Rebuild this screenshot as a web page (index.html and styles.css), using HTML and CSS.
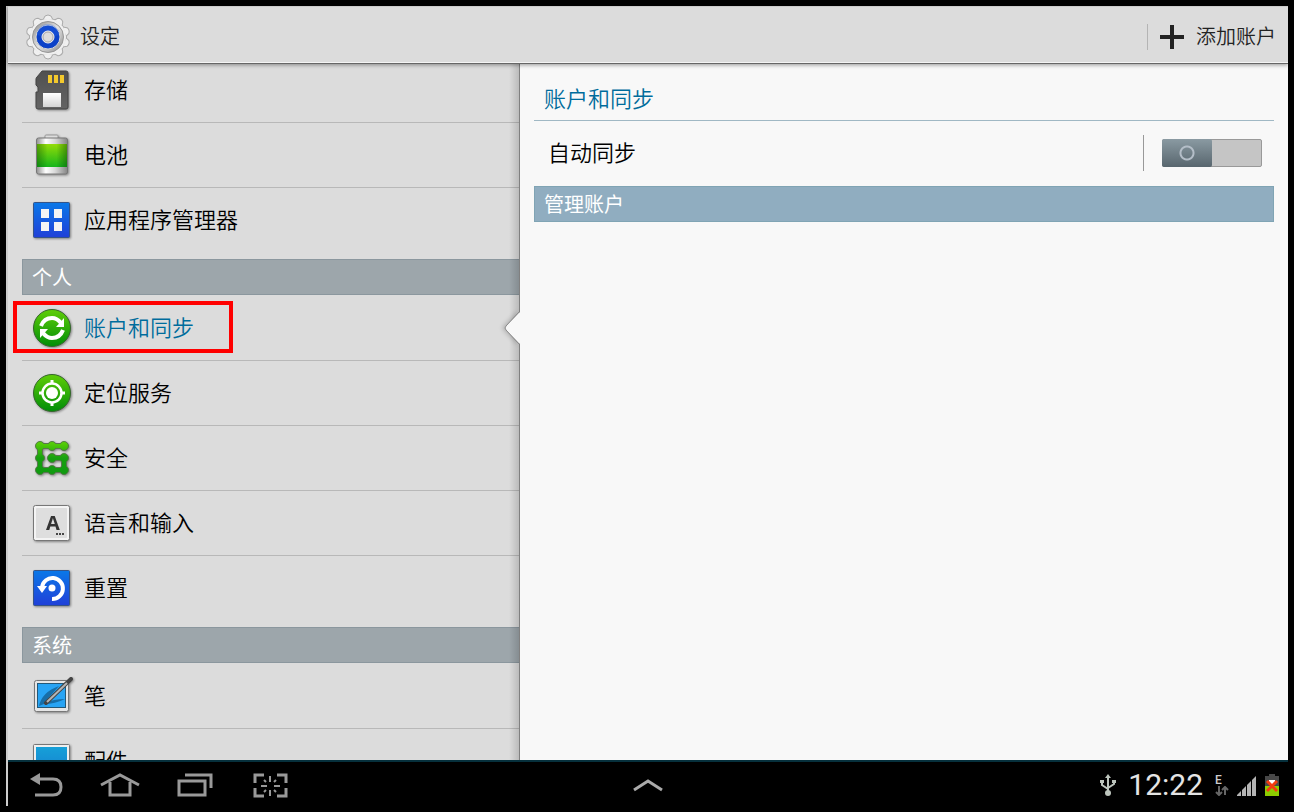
FILE: index.html
```
<!DOCTYPE html>
<html lang="zh-CN">
<head>
    <meta charset="UTF-8">
    <meta name="viewport" content="width=device-width, initial-scale=1.0">
    <title>设定</title>
    <link rel="stylesheet" href="styles.css">
</head>
<body>
    <svg class="defs" width="0" height="0" aria-hidden="true">
        <defs>
            <linearGradient id="verde" x2="0" y2="1"><stop offset="0" stop-color="#5fce08"/><stop offset="1" stop-color="#008d08"/></linearGradient>
            <linearGradient id="verdePuntos" gradientUnits="userSpaceOnUse" x1="0" y1="4" x2="0" y2="36"><stop offset="0" stop-color="#5bd008"/><stop offset=".5" stop-color="#17a010"/><stop offset="1" stop-color="#0f9a10"/></linearGradient>
            <linearGradient id="azul" x2="0" y2="1"><stop offset="0" stop-color="#0a78e8"/><stop offset="1" stop-color="#2040d8"/></linearGradient>
            <linearGradient id="pila" x2="0" y2="1"><stop offset="0" stop-color="#93dc08"/><stop offset="1" stop-color="#16b51c"/></linearGradient>
            <linearGradient id="pilaSombra"><stop offset="0" stop-color="#004000" stop-opacity=".4"/><stop offset=".35" stop-color="#004000" stop-opacity="0"/><stop offset=".65" stop-color="#004000" stop-opacity="0"/><stop offset="1" stop-color="#004000" stop-opacity=".45"/></linearGradient>
            <linearGradient id="metal"><stop offset="0" stop-color="#8f8f8f"/><stop offset=".3" stop-color="#fff"/><stop offset=".6" stop-color="#d8d8d8"/><stop offset="1" stop-color="#858585"/></linearGradient>
            <linearGradient id="blanco" x2="0" y2="1"><stop offset="0" stop-color="#fff"/><stop offset="1" stop-color="#d4d4d4"/></linearGradient>
            <linearGradient id="oscuro" x2="0" y2="1"><stop offset="0" stop-color="#505050"/><stop offset="1" stop-color="#646464"/></linearGradient>
            <linearGradient id="cielo" x2="0" y2="1"><stop offset="0" stop-color="#16a0d8"/><stop offset="1" stop-color="#1684d0"/></linearGradient>
            <linearGradient id="aro" x2="1" y2="1"><stop offset="0" stop-color="#8a8a8a"/><stop offset=".5" stop-color="#e2e2e2"/><stop offset="1" stop-color="#8a8a8a"/></linearGradient>
        </defs>
    </svg>

    <div class="tablet">
        <header class="cabecera">
            <svg class="engranaje" width="46" height="48" viewBox="-23 -24 46 48" aria-hidden="true">
                <g fill="#f0f0f0" stroke="#aaa" stroke-width="1">
                    <circle r="18.500"/>
                    <path id="diente" d="M-5-17L-3-21Q0-23 3-21L5-17Z"/>
                    <use href="#diente" transform="rotate(36)"/>
                    <use href="#diente" transform="rotate(72)"/>
                    <use href="#diente" transform="rotate(108)"/>
                    <use href="#diente" transform="rotate(144)"/>
                    <use href="#diente" transform="rotate(180)"/>
                    <use href="#diente" transform="rotate(216)"/>
                    <use href="#diente" transform="rotate(252)"/>
                    <use href="#diente" transform="rotate(288)"/>
                    <use href="#diente" transform="rotate(324)"/>
                    <circle r="18" stroke="none"/>
                </g>
                <circle r="15.500" fill="url(#aro)" stroke="#969696" stroke-width="1"/>
                <circle r="12" fill="#0b41c8" stroke="#d5d5d5"/>
                <path d="M-11-2A11 11 0 0 1 11-2Q0 2-11-2Z" fill="#2c6bea" opacity=".3"/>
                <circle r="6" fill="#dcdcdc" stroke="#f4f4f4"/>
                <circle r="5" fill="#dcdcdc" stroke="#aaa"/>
            </svg>
            <h1>设定</h1>
            <button class="agregar" type="button">
                <svg width="24" height="24" viewBox="0 0 24 24" aria-hidden="true"><path d="M12 0V24M0 12H24" stroke="#222" stroke-width="4"/></svg>
                <span>添加账户</span>
            </button>
        </header>

        <main class="contenido">
            <nav class="menu">
                <ul>
                    <li><a href="#">
                        <svg class="icono" viewBox="0 0 40 40"><path d="M10 1H34Q36 1 36 3V37Q36 39 34 39H6Q4 39 4 37V22H6V17L4 15V9Q4 8 5 7Z" fill="url(#oscuro)" stroke="#444"/><path d="M18 5V13M24 5V13M30 5V13" stroke="#f3c92d" stroke-width="4"/><rect x="11" y="23" width="18" height="14" fill="url(#blanco)"/></svg>
                        <span>存储</span></a></li>
                    <li><a href="#">
                        <svg class="icono" viewBox="0 0 40 40"><path d="M13 4V1Q13 0 14 0H25Q26 0 26 1V4" fill="#ddd" stroke="#999"/><rect x="4.500" y="3" width="31" height="36" rx="2" fill="url(#metal)" stroke="#777"/><rect x="5" y="9" width="30" height="23" fill="url(#pila)"/><rect x="5" y="9" width="30" height="23" fill="url(#pilaSombra)"/></svg>
                        <span>电池</span></a></li>
                    <li><a href="#">
                        <svg class="icono" viewBox="0 0 40 40"><rect x="1.500" y="2.500" width="36" height="35" rx="1" fill="url(#azul)" stroke="#355488"/><path d="M9 9h8v9H9zM22 9h8v9h-8zM9 22h8v9H9zM22 22h8v9h-8z" fill="#f4f4f4"/></svg>
                        <span>应用程序管理器</span></a></li>
                </ul>
                <h2>个人</h2>
                <ul>
                    <li class="activo"><a href="#" aria-current="page">
                        <svg class="icono" viewBox="0 0 40 40"><circle cx="20" cy="20" r="18.500" fill="url(#verde)" stroke="#35662c"/><g fill="none" stroke="#fff" stroke-width="4"><path d="M9 18Q12 10 20 10Q25 10 29 15"/><path d="M31 22Q28 30 20 30Q15 30 11 25"/></g><path d="M32 10V19H24ZM8 30V21H16Z" fill="#fff"/></svg>
                        <span>账户和同步</span></a>
                        <div class="marco"></div>
                        <svg class="flecha" width="16" height="34" viewBox="0 0 16 34" aria-hidden="true"><path d="M16 1L2 15Q0 17 2 19L16 33Z" fill="#f8f8f8"/><path d="M15 1L2 15Q0 17 2 19L15 33" fill="none" stroke="#888"/></svg>
                    </li>
                    <li><a href="#">
                        <svg class="icono" viewBox="0 0 40 40"><circle cx="20" cy="20" r="18.500" fill="url(#verde)" stroke="#35662c"/><circle cx="20" cy="20" r="9.500" fill="none" stroke="#fff" stroke-width="2.500"/><circle cx="20" cy="20" r="6" fill="#fff"/><path d="M20 7V11M20 29V33M7 20H11M29 20H33" stroke="#fff" stroke-width="3"/></svg>
                        <span>定位服务</span></a></li>
                    <li><a href="#">
                        <svg class="icono" viewBox="0 0 40 40"><g fill="none" stroke="#5c7752" stroke-linejoin="round"><path d="M32 8H8V32H32V20H20" stroke-width="6"/></g><g fill="url(#verdePuntos)" stroke="#527a46"><circle cx="8" cy="8" r="4.500"/><circle cx="20" cy="8" r="4.500"/><circle cx="32" cy="8" r="4.500"/><circle cx="8" cy="20" r="4.500"/><circle cx="20" cy="20" r="4.500"/><circle cx="32" cy="20" r="4.500"/><circle cx="8" cy="32" r="4.500"/><circle cx="20" cy="32" r="4.500"/><circle cx="32" cy="32" r="4.500"/></g><path d="M32 8H8V32H32V20H20" fill="none" stroke="url(#verdePuntos)" stroke-width="4"/></svg>
                        <span>安全</span></a></li>
                    <li><a href="#">
                        <svg class="icono" viewBox="0 0 40 40"><rect x="1.500" y="2.500" width="36" height="35" rx="2" fill="#f4f4f4" stroke="#777"/><rect x="4" y="5" width="31" height="30" rx="1" fill="#dedede"/><text class="tecla" x="21" y="27" text-anchor="middle">A</text><path d="M24 31H33" stroke="#444" stroke-width="2" stroke-dasharray="2 1"/></svg>
                        <span>语言和输入</span></a></li>
                    <li><a href="#">
                        <svg class="icono" viewBox="0 0 40 40"><rect x="1.500" y="2.500" width="36" height="35" rx="1" fill="url(#azul)" stroke="#355488"/><path d="M10 19A10.500 10.500 0 1 1 20 31" fill="none" stroke="#fff" stroke-width="4"/><path d="M5 18H15L10 25Z" fill="#fff"/><circle cx="20" cy="20" r="3.500" fill="#fff"/></svg>
                        <span>重置</span></a></li>
                </ul>
                <h2>系统</h2>
                <ul>
                    <li><a href="#">
                        <svg class="icono" viewBox="0 0 40 40"><rect x="2.500" y="4.500" width="34" height="31" rx="2" fill="#e6e6e6" stroke="#777"/><rect x="5.500" y="7.500" width="28" height="24" fill="#28a4f4" stroke="#245878"/><path d="M7 30Q10 16 27 10L12 27Q22 23 33 23Q23 28 12 28Z" fill="#176ea8"/><path d="M14 27L39 3" stroke="#444" stroke-width="4" stroke-linecap="round"/><path d="M15 26L35 7" stroke="#b4b4b4" stroke-width="2"/></svg>
                        <span>笔</span></a></li>
                    <li><a href="#">
                        <svg class="icono" viewBox="0 0 40 40"><rect x="1.500" y="3.500" width="36" height="34" rx="1" fill="#eee" stroke="#777"/><rect x="4" y="6" width="31" height="24" fill="url(#cielo)"/></svg>
                        <span>配件</span></a></li>
                </ul>
            </nav>

            <section class="detalle">
                <h2 class="titulo">账户和同步</h2>
                <div class="opcion">
                    <label for="sincronizar">自动同步</label>
                    <div class="control">
                        <input class="interruptor" id="sincronizar" type="checkbox" role="switch">
                    </div>
                </div>
                <h3 class="grupo">管理账户</h3>
            </section>
        </main>

        <footer class="barra">
            <div class="navegacion">
                <button type="button" aria-label="返回"><svg width="40" height="28" viewBox="0 0 40 28"><path d="M13 8H28Q36 8 36 16T28 24H10" fill="none" stroke="#999" stroke-width="3"/><path d="M5 8L15 2V14Z" fill="#999"/></svg></button>
                <button type="button" aria-label="主屏幕"><svg width="40" height="28" viewBox="0 0 40 28"><path d="M1 14L20 4L39 14" fill="none" stroke="#999" stroke-width="3"/><path d="M10 11V24H30V11" fill="none" stroke="#999" stroke-width="3"/></svg></button>
                <button type="button" aria-label="最近"><svg width="40" height="28" viewBox="0 0 40 28"><path d="M10 4H36V17" fill="none" stroke="#999" stroke-width="3"/><rect x="4" y="10" width="26" height="14" fill="none" stroke="#999" stroke-width="3"/></svg></button>
                <button type="button" aria-label="截屏"><svg width="40" height="28" viewBox="0 0 40 28"><path d="M5 12V4H14M27 4H36V12M36 17V25H27M14 25H5V17" fill="none" stroke="#999" stroke-width="3"/><path d="M20 5V11M20 19V25M11 15H17M24 15H30M14 9L16 11M24 11L26 9M14 21L16 19M24 19L26 21" stroke="#999" stroke-width="2"/></svg></button>
            </div>
            <button type="button" aria-label="展开"><svg width="32" height="28" viewBox="0 0 32 28"><path d="M2 19L16 10L30 19" fill="none" stroke="#aaa" stroke-width="3"/></svg></button>
            <div class="estado">
                <svg width="16" height="24" viewBox="0 0 16 24" aria-hidden="true"><path d="M8 3V20M2 8V12L8 16M14 8V11L8 15" fill="none" stroke="#bcc4bc" stroke-width="2"/><path d="M8 1L11 5H5ZM0 7H4V10H0ZM12 7H16V10H12Z" fill="#bcc4bc"/><circle cx="8" cy="20" r="3" fill="#bcc4bc"/></svg>
                <time class="reloj">12:22</time>
                <div class="red">
                    <span>E</span>
                    <svg width="14" height="10" viewBox="0 0 14 10" aria-hidden="true"><path d="M4 0V9M1 6L4 9L7 6M10 9V1M7 4L10 1L13 4" fill="none" stroke="#666" stroke-width="2"/></svg>
                </div>
                <svg class="senal" width="20" height="20" viewBox="0 0 20 20" aria-hidden="true"><path d="M0 20V19L4 15V20ZM5 20V14L9 10V20ZM10 20V9L14 5V20ZM15 20V4L19 0V20Z" fill="#b4b4b4"/></svg>
                <svg width="14" height="22" viewBox="0 0 14 22" aria-hidden="true"><path d="M0 2H4V0H10V2H14V12H0Z" fill="#484848"/><path d="M0 12H14V22H0Z" fill="#8ccc00"/><path d="M4 6H10V11H4Z" fill="#fff"/><path d="M2 7L12 17M12 7L2 17" stroke="#f43c10" stroke-width="3"/></svg>
            </div>
        </footer>
    </div>
</body>
</html>
```
FILE: styles.css
```
* {
    box-sizing: border-box;
}

body {
    margin: 0;
    padding: 6px;
    height: 100vh;
    background-color: #000;
    color: #000;
    font-family: Roboto, "Noto Sans CJK SC", sans-serif;
    font-size: 22px;
    font-weight: 350;
}

h1, h2, h3, ul {
    margin: 0;
    padding: 0;
    font-weight: 350;
}

button {
    padding: 0;
    border: none;
    background: none;
    color: inherit;
    font: inherit;
    cursor: pointer;
}

svg {
    display: block;
    flex: none;
}

.defs {
    position: absolute;
}

.tablet {
    display: flex;
    flex-direction: column;
    height: 100%;
    border-left: 2px solid #ccc;
}

/* Barra superior */
.cabecera {
    position: relative;
    z-index: 5;
    display: flex;
    align-items: center;
    flex: none;
    height: 58px;
    padding: 3px 12px 0 17px;
    background-color: #dcdcdc;
    border-top: 1px solid #ccc;
    border-bottom: 1px solid #666;
    box-shadow: inset 0 -1px #f4f4f4, 0 1px 4px rgba(0, 0, 0, 0.4);
}

.cabecera h1,
.agregar span {
    padding-bottom: 3px;
    color: #222;
    font-size: 20px;
}

.cabecera h1 {
    margin-left: 9px;
}

.agregar {
    display: flex;
    align-items: center;
    gap: 12px;
    height: 26px;
    margin-left: auto;
    padding-left: 12px;
    border-left: 1px solid #b4b4b4;
}

.contenido {
    display: flex;
    flex: 1;
    min-height: 0;
}

/* Menu lateral */
.menu {
    position: relative;
    flex: 0 0 40%;
    padding-left: 14px;
    overflow: hidden;
    background-color: #dcdcdc;
}

.menu::after {
    content: "";
    position: absolute;
    top: 0;
    right: 0;
    bottom: 0;
    width: 10px;
    background: linear-gradient(to right, rgba(0, 0, 0, 0), rgba(0, 0, 0, 0.15));
    border-right: 1px solid #808080;
}

.menu ul {
    list-style: none;
}

.menu ul:first-child {
    margin-top: -6px;
}

.menu li {
    position: relative;
    height: 65px;
    border-bottom: 1px solid #b8b8b8;
}

.menu li:last-child {
    border-bottom: none;
}

.menu a {
    display: flex;
    align-items: center;
    gap: 12px;
    height: 64px;
    padding-left: 10px;
    color: #000;
    text-decoration: none;
}

.menu a span {
    padding-bottom: 4px;
}

.menu h2 {
    height: 36px;
    margin: 6px 0 1px;
    padding-left: 9px;
    background-color: #9da6ab;
    border: 1px solid #8b979e;
    color: #fff;
    font-size: 20px;
    font-weight: 400;
    line-height: 36px;
}

.menu .activo a {
    color: #006c9c;
}

.icono {
    width: 40px;
    height: 40px;
    overflow: visible;
    filter: drop-shadow(1px 1px 1px rgba(0, 0, 0, 0.4));
}

.tecla {
    fill: #333;
    font-family: "Open Sans", sans-serif;
    font-size: 20px;
    font-weight: 700;
}

.marco {
    position: absolute;
    top: 5px;
    left: -9px;
    width: 220px;
    height: 52px;
    border: 4px solid #f00;
    pointer-events: none;
}

.flecha {
    position: absolute;
    top: 15px;
    right: 0;
    z-index: 2;
    filter: drop-shadow(-2px 0 2px rgba(0, 0, 0, 0.2));
}

/* Panel derecho */
.detalle {
    flex: 1;
    padding: 14px 14px 0;
    background-color: #f8f8f8;
}

.titulo {
    height: 43px;
    padding-left: 10px;
    border-bottom: 1px solid #a0b8c4;
    color: #006c9c;
    font-size: 22px;
    line-height: 44px;
}

.opcion {
    display: flex;
    align-items: center;
    justify-content: space-between;
    height: 65px;
    padding: 0 12px 2px 14px;
}

.opcion label {
    padding-bottom: 3px;
}

.control {
    display: flex;
    align-items: center;
    height: 36px;
    padding-left: 18px;
    border-left: 1px solid #999;
}

.interruptor {
    appearance: none;
    width: 100px;
    height: 28px;
    margin: 0;
    border: 1px solid #999;
    border-radius: 2px;
    background-color: #c5c5c5;
    cursor: pointer;
}

.interruptor::before {
    content: "";
    display: block;
    width: 50px;
    height: 28px;
    margin: -1px;
    border-radius: 2px;
    background: radial-gradient(circle, transparent 5px, #b4bec8 6px, #b4bec8 7px, transparent 8px), linear-gradient(#8a9aa2, #58666e);
}

.interruptor:checked::before {
    margin-left: 49px;
}

.grupo {
    height: 36px;
    padding-left: 9px;
    background-color: #90adc0;
    border: 1px solid #80a4b4;
    color: #fff;
    font-size: 20px;
    font-weight: 400;
    line-height: 36px;
}

/* Barra inferior */
.barra {
    display: grid;
    grid-template-columns: 1fr auto 1fr;
    align-items: center;
    flex: none;
    height: 46px;
    padding: 2px 9px 0;
    border-top: 2px solid #06303c;
    background-color: #000;
}

.navegacion {
    display: flex;
    gap: 35px;
    padding-left: 8px;
}

.estado {
    display: flex;
    align-items: center;
    justify-content: flex-end;
    gap: 12px;
}

.reloj {
    color: #e4e4e4;
    font-size: 30px;
    font-weight: 400;
    line-height: 36px;
}

.red {
    color: #ccc;
    font-size: 12px;
    font-weight: 500;
    line-height: 12px;
}

.senal {
    margin: 2px -4px 0 -4px;
}
```
